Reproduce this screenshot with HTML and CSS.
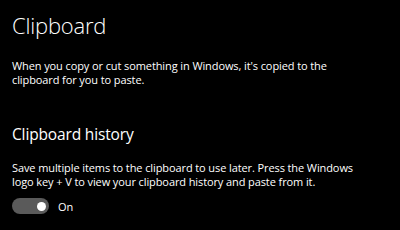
FILE: index.html
```html
<!DOCTYPE html>
<html lang="en">
<head>
  <meta charset="UTF-8">
  <title>Clipboard</title>
  <link rel="stylesheet" href="styles.css">
</head>
<body>
  <div class="page">
    <h1>Clipboard</h1>
    <p class="desc">When you copy or cut something in Windows, it's copied to the clipboard for you to paste.</p>

    <h2>Clipboard history</h2>
    <p class="desc desc-tight">Save multiple items to the clipboard to use later. Press the Windows logo key + V to view your clipboard history and paste from it.</p>

    <div class="toggle-row">
      <div class="toggle"><span class="knob"></span></div>
      <span class="toggle-label">On</span>
    </div>
  </div>
</body>
</html>
```

FILE: styles.css
```css
body {
  margin: 0;
  background: #000000;
  color: #ffffff;
  font-family: "Open Sans", "Noto Sans", sans-serif;
}

.page {
  padding: 10px 12px;
  width: 352px;
}

h1 {
  margin: 0;
  font-size: 22px;
  font-weight: 300;
  line-height: 30px;
  letter-spacing: -0.2px;
}

h2 {
  margin: 35px 0 0 0;
  font-size: 15.5px;
  font-weight: 400;
  line-height: 22px;
  letter-spacing: -0.15px;
}

.desc {
  margin: 19px 0 0 0;
  font-size: 11px;
  line-height: 14.3px;
  letter-spacing: -0.1px;
}

.desc-tight {
  margin-top: 16px;
}

.toggle-row {
  display: flex;
  align-items: center;
  gap: 9px;
  margin-top: 9px;
}

.toggle {
  width: 37px;
  height: 16px;
  border-radius: 8px;
  background: #5a5a5a;
  display: flex;
  align-items: center;
  justify-content: flex-end;
  padding-right: 3px;
  box-sizing: border-box;
}

.knob {
  width: 9px;
  height: 9px;
  border-radius: 50%;
  background: #ffffff;
}

.toggle-label {
  font-size: 11px;
}
```
